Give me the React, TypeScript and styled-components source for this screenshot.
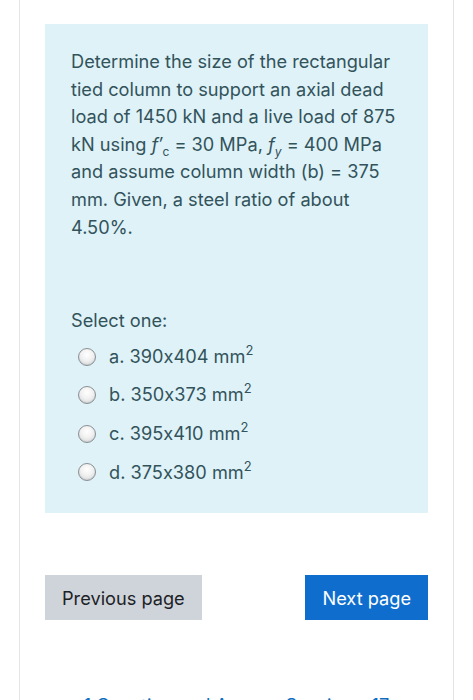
import React from "react";
import styled, { createGlobalStyle } from "styled-components";

const GlobalStyle = createGlobalStyle`
  html, body {
    margin: 0;
    padding: 0;
    background: #ffffff;
  }
  body {
    font-family: Inter, "Liberation Sans", Arial, sans-serif;
    font-feature-settings: "calt" 0;
    -webkit-font-smoothing: antialiased;
  }
`;

const Page = styled.div`
  height: 700px;
  overflow: hidden;
`;

const Card = styled.div`
  margin: 0 19px;
  border-left: 1px solid #e4e4e4;
  border-right: 1px solid #e4e4e4;
  padding: 24px 25px 0 25px;
  min-height: 760px;
`;

const Formulation = styled.div`
  background: #def2f8;
  color: #33535b;
  padding: 24px 26px 27px 26px;
  font-size: 18.2px;
  line-height: 27.6px;
`;

const QuestionText = styled.p`
  margin: 0 0 66px 0;
  white-space: nowrap;
`;

const Sub = styled.sub<{ $italic?: boolean }>`
  font-size: 12px;
  line-height: 0;
  font-style: ${(p) => (p.$italic ? "italic" : "normal")};
`;

const Prompt = styled.div`
  margin-bottom: 8px;
`;

const Options = styled.div`
  display: flex;
  flex-direction: column;
  gap: 11px;
  padding-left: 7px;
`;

const Option = styled.label`
  display: flex;
  align-items: center;
  gap: 13px;
  height: 27.6px;
`;

const Radio = styled.span`
  width: 16px;
  height: 16px;
  border-radius: 50%;
  border: 1px solid #8a8f92;
  background: radial-gradient(circle at 50% 35%, #ffffff 0%, #f1f1f1 45%, #cfd2d4 100%);
  box-shadow: inset 0 -1px 1px rgba(0, 0, 0, 0.08);
  flex-shrink: 0;
`;

const Sup = styled.sup`
  font-size: 13px;
  line-height: 0;
  vertical-align: 8px;
`;

const NavRow = styled.div`
  display: flex;
  justify-content: space-between;
  margin-top: 62px;
`;

const NavButton = styled.button<{ $primary?: boolean }>`
  height: 45px;
  padding: 0 17px;
  border: none;
  border-radius: 0;
  font-family: inherit;
  font-size: 18.2px;
  background: ${(p) => (p.$primary ? "#0f6ecd" : "#ced4da")};
  color: ${(p) => (p.$primary ? "#ffffff" : "#1d2125")};
`;

const JumpLink = styled.a`
  display: block;
  margin-top: 72px;
  text-align: center;
  color: #0f6cbf;
  font-size: 18.2px;
  line-height: 27px;
  text-decoration: none;
`;

export default function App() {
  return (
    <Page>
      <GlobalStyle />
      <Card>
        <Formulation>
          <QuestionText>
            Determine the size of the rectangular
            <br />
            tied column to support an axial dead
            <br />
            load of 1450 kN and a live load of 875
            <br />
            kN using <i>f′</i>
            <Sub>c</Sub> = 30 MPa, <i>f</i>
            <Sub $italic>y</Sub> = 400 MPa
            <br />
            and assume column width (b) = 375
            <br />
            mm. Given, a steel ratio of about
            <br />
            4.50%.
          </QuestionText>
          <Prompt>Select one:</Prompt>
          <Options>
            {["a. 390x404", "b. 350x373", "c. 395x410", "d. 375x380"].map((o) => (
              <Option key={o}>
                <Radio />
                <span>
                  {o} mm<Sup>2</Sup>
                </span>
              </Option>
            ))}
          </Options>
        </Formulation>
        <NavRow>
          <NavButton>Previous page</NavButton>
          <NavButton $primary>Next page</NavButton>
        </NavRow>
        <JumpLink href="#">1 Question and Answer Session - 17</JumpLink>
      </Card>
    </Page>
  );
}
